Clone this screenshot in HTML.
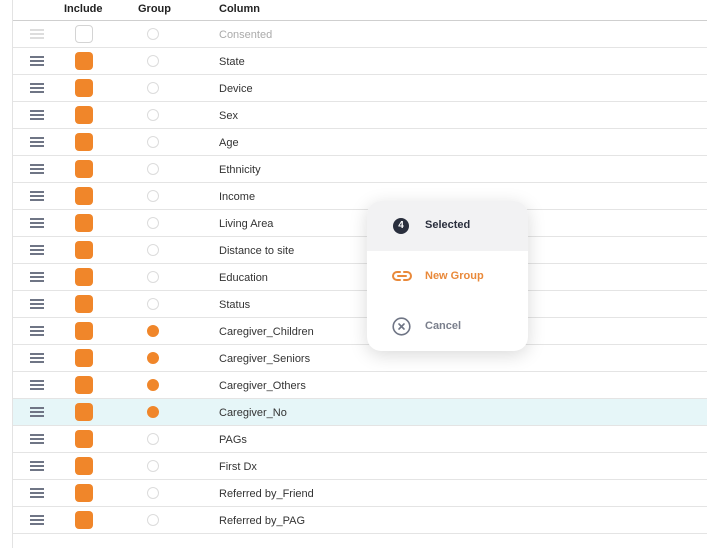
<!DOCTYPE html><html><head><style>
body{margin:0;width:707px;height:548px;background:#fff;font-family:"Liberation Sans",sans-serif;position:relative;overflow:hidden}
.vl{position:absolute;left:12px;top:0;width:1px;height:548px;background:#e3e3e3}
.hd{position:absolute;top:0;left:13px;right:0;height:20px;border-bottom:1.5px solid #cfcfcf;font-size:11px;font-weight:bold;color:#222}
.hd span{position:absolute;top:3px}
.row{position:absolute;left:13px;right:0;height:26px;border-bottom:1px solid #e4e4e4}
.ham{position:absolute;left:17px;top:8px;width:14px;height:10px;border-top:2px solid #6f7585;border-bottom:2px solid #6f7585;box-sizing:border-box}
.ham:after{content:"";position:absolute;left:0;right:0;top:2px;height:2px;background:#6f7585}
.cb{position:absolute;left:62px;top:4px;width:18px;height:18px;border-radius:4px;background:#f0862a;box-sizing:border-box}
.rd{position:absolute;left:134px;top:7px;width:12px;height:12px;border-radius:50%;border:1px solid #dcdcdc;box-sizing:border-box}
.rd.on{background:#f0862a;border-color:#f0862a}
.t{position:absolute;left:206px;top:8px;font-size:11px;color:#333}
.pop{position:absolute;left:367px;top:201px;width:161px;height:150px;border-radius:14px;background:#fff;box-shadow:0 4px 18px rgba(0,0,0,.15);overflow:hidden;font-size:11px;font-weight:bold}
</style></head><body>
<div class="vl"></div>
<div class="hd"><span style="left:51px">Include</span><span style="left:125px">Group</span><span style="left:206px">Column</span></div>
<div id="rows"></div>
<div class="pop">
<div style="height:50px;background:#f2f2f3;position:relative"><div style="position:absolute;left:26px;top:17px;width:16px;height:16px;border-radius:50%;background:#2a2f3d;color:#fff;font-size:10px;text-align:center;line-height:16px">4</div><span style="position:absolute;left:58px;top:18px;color:#2a2f3d">Selected</span></div>
<svg style="position:absolute;left:25px;top:69px" width="20" height="12" viewBox="0 0 20 12"><path d="M8 2H5a4 4 0 0 0 0 8h3M12 2h3a4 4 0 0 1 0 8h-3M6 6h8" fill="none" stroke="#e9893a" stroke-width="2" stroke-linecap="round"/></svg>
<span style="position:absolute;left:58px;top:69px;color:#e9893a">New Group</span>
<svg style="position:absolute;left:25px;top:116px" width="19" height="19" viewBox="0 0 19 19"><circle cx="9.5" cy="9.5" r="8.3" fill="none" stroke="#6f7585" stroke-width="1.6"/><path d="M7 7l5 5M12 7l-5 5" stroke="#6f7585" stroke-width="1.6" stroke-linecap="round"/></svg>
<span style="position:absolute;left:58px;top:119px;color:#7a7f8c">Cancel</span>
</div>
<script>
var n=["Consented","State","Device","Sex","Age","Ethnicity","Income","Living Area","Distance to site","Education","Status","Caregiver_Children","Caregiver_Seniors","Caregiver_Others","Caregiver_No","PAGs","First Dx","Referred by_Friend","Referred by_PAG"],h="";
n.forEach(function(s,i){var y=21+i*27;var f=i==0;var on=i>=11&&i<=14;
h+='<div class="row" style="top:'+y+'px;'+(i==14?'background:#e6f6f8;':'')+'"><div class="ham" style="'+(f?'border-color:#ddd;':'')+'"></div><div class="cb" style="'+(f?'background:#fff;border:1px solid #d4d4d4;':'')+'"></div><div class="rd'+(on?' on':'')+'"></div><div class="t" style="'+(f?'color:#aaa':'')+'">'+s+'</div></div>';});
document.getElementById("rows").innerHTML=h;
</script>
<style>.row:first-child .ham:after{background:#ddd}</style>
</body></html>
